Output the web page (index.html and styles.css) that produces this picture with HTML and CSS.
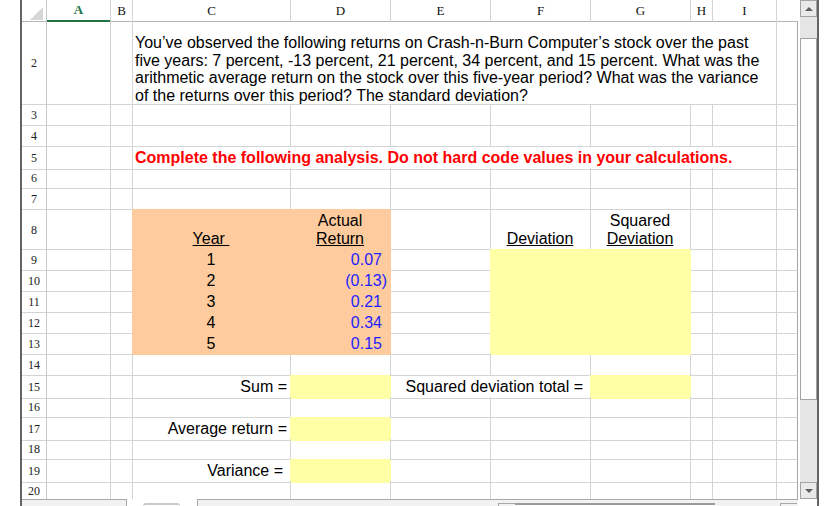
FILE: index.html
```html
<!DOCTYPE html>
<html lang="en">
<head>
<meta charset="utf-8">
<title>Crash-n-Burn Computer returns</title>
<link rel="stylesheet" href="styles.css">
</head>
<body>
<div class="window">
  <div class="gutter"></div>
  <div class="edge"></div>
  <div class="sheet">
    <div class="row hdr">
      <div class="corner"><svg width="13" height="13" viewBox="0 0 13 13"><polygon points="13,0 13,13 0,13" fill="#d6d6d6"/></svg></div>
      <div class="sel">A</div><div>B</div><div>C</div><div>D</div><div>E</div><div>F</div><div>G</div><div>H</div><div>I</div><div class="cj"></div>
    </div>
    <div class="row tall">
      <div class="rh">2</div><div></div><div></div>
      <div class="span-ci"><span class="para">You’ve observed the following returns on Crash-n-Burn Computer’s stock over the past<br>five years: 7 percent, -13 percent, 21 percent, 34 percent, and 15 percent. What was the<br>arithmetic average return on the stock over this five-year period? What was the variance<br>of the returns over this period? The standard deviation?</span></div>
      <div class="cj"></div>
    </div>
    <div class="row"><div class="rh">3</div><div></div><div></div><div></div><div></div><div></div><div></div><div></div><div></div><div></div><div class="cj"></div></div>
    <div class="row"><div class="rh">4</div><div></div><div></div><div></div><div></div><div></div><div></div><div></div><div></div><div></div><div class="cj"></div></div>
    <div class="row">
      <div class="rh">5</div><div></div><div></div>
      <div class="span-ci red">Complete the following analysis. Do not hard code values in your calculations.</div>
      <div class="cj"></div>
    </div>
    <div class="row"><div class="rh">6</div><div></div><div></div><div></div><div></div><div></div><div></div><div></div><div></div><div></div><div class="cj"></div></div>
    <div class="row"><div class="rh">7</div><div></div><div></div><div></div><div></div><div></div><div></div><div></div><div></div><div></div><div class="cj"></div></div>
    <div class="row mid">
      <div class="rh">8</div><div></div><div></div>
      <div class="org ctr"><u class="keep">Year </u></div>
      <div class="org ctr"><span class="stack">Actual<br><u>Return</u></span></div>
      <div></div>
      <div class="ctr"><u>Deviation</u></div>
      <div class="ctr"><span class="stack">Squared<br><u>Deviation</u></span></div>
      <div></div><div></div><div class="cj"></div>
    </div>
    <div class="row"><div class="rh">9</div><div></div><div></div><div class="org ctr">1</div><div class="org num pos">0.07</div><div></div><div class="yel"></div><div class="yel"></div><div></div><div></div><div class="cj"></div></div>
    <div class="row"><div class="rh">10</div><div></div><div></div><div class="org ctr">2</div><div class="org num">(0.13)</div><div></div><div class="yel"></div><div class="yel"></div><div></div><div></div><div class="cj"></div></div>
    <div class="row"><div class="rh">11</div><div></div><div></div><div class="org ctr">3</div><div class="org num pos">0.21</div><div></div><div class="yel"></div><div class="yel"></div><div></div><div></div><div class="cj"></div></div>
    <div class="row"><div class="rh">12</div><div></div><div></div><div class="org ctr">4</div><div class="org num pos">0.34</div><div></div><div class="yel"></div><div class="yel"></div><div></div><div></div><div class="cj"></div></div>
    <div class="row"><div class="rh">13</div><div></div><div></div><div class="org ctr">5</div><div class="org num pos">0.15</div><div></div><div class="yel"></div><div class="yel"></div><div></div><div></div><div class="cj"></div></div>
    <div class="row"><div class="rh">14</div><div></div><div></div><div></div><div></div><div></div><div></div><div></div><div></div><div></div><div class="cj"></div></div>
    <div class="row">
      <div class="rh">15</div><div></div><div></div>
      <div class="rt">Sum =</div>
      <div class="yel"></div>
      <div class="span-ef rt trail">Squared deviation total =</div>
      <div class="yel"></div>
      <div></div><div></div><div class="cj"></div>
    </div>
    <div class="row"><div class="rh">16</div><div></div><div></div><div></div><div></div><div></div><div></div><div></div><div></div><div></div><div class="cj"></div></div>
    <div class="row"><div class="rh">17</div><div></div><div></div><div class="rt">Average return =</div><div class="yel"></div><div></div><div></div><div></div><div></div><div></div><div class="cj"></div></div>
    <div class="row"><div class="rh">18</div><div></div><div></div><div></div><div></div><div></div><div></div><div></div><div></div><div></div><div class="cj"></div></div>
    <div class="row"><div class="rh">19</div><div></div><div></div><div class="rt trail">Variance =</div><div class="yel"></div><div></div><div></div><div></div><div></div><div></div><div class="cj"></div></div>
    <div class="row"><div class="rh">20</div><div></div><div></div><div></div><div></div><div></div><div></div><div></div><div></div><div></div><div class="cj"></div></div>
  </div>
  <div class="vscroll">
    <div class="sbtn"><span class="tri-up"></span></div>
    <div class="track top"></div>
    <div class="thumb"></div>
    <div class="track fill"></div>
    <div class="sbtn"><span class="tri-down"></span></div>
  </div>
  <div class="edge"></div>
  <div class="rest"></div>
</div>
<div class="bottom">
  <div class="gutter"></div>
  <div class="edge"></div>
  <div class="tabs"></div>
  <div class="tabgap"><span class="tabmark"></span></div>
  <div class="hscroll">
    <div class="hgap"></div>
    <div class="hbtn"></div>
    <div class="hthumb"></div>
    <div class="hgap2"></div>
    <div class="hbtn end"></div>
  </div>
  <div class="bcorner"></div>
  <div class="edge"></div>
  <div class="rest"></div>
</div>
</body>
</html>
```
FILE: styles.css
```css
* { box-sizing: border-box; }
html, body { margin: 0; padding: 0; }
body {
  width: 828px;
  height: 506px;
  overflow: hidden;
  background: #fff;
  font-family: "Liberation Sans", Arial, sans-serif;
}

.window { display: flex; height: 499px; }
.gutter { width: 20px; flex: none; }
.edge { width: 2px; flex: none; background: #646464; }
.rest { width: 9px; flex: none; }

.sheet { width: 776px; height: 499px; overflow: hidden; flex: none; }

.row {
  display: grid;
  grid-template-columns: 25px 64px 22px 158px 100px 100px 100px 100px 22px 64px 21px;
  height: 21px;
}
.row.tall { height: 84px; }
.row.mid { height: 40px; }

.row > div {
  display: flex;
  align-items: flex-end;
  min-width: 0;
  padding: 0 3px 0 2px;
  border-right: 1px solid #d4d4d4;
  border-bottom: 1px solid #d4d4d4;
  font-size: 16px;
  line-height: 20px;
  white-space: nowrap;
  color: #000;
}

/* header row */
.hdr > div {
  align-items: center;
  justify-content: center;
  padding: 0;
  font-family: "Liberation Serif", "Times New Roman", serif;
  font-size: 13px;
  color: #111;
  border-bottom-color: #b4b4b4;
}
.hdr > .corner {
  justify-content: flex-end;
  align-items: flex-end;
  padding: 0 3px 1px 0;
  border-right-color: #c8c8c8;
}
.hdr > .sel {
  color: #217346;
  font-weight: bold;
  border-bottom: 2px solid #217346;
}
.hdr > .cj { border-right: 0; }

/* row numbers */
.row > .rh {
  justify-content: center;
  align-items: center;
  padding: 0;
  font-family: "Liberation Serif", "Times New Roman", serif;
  font-size: 12px;
  color: #222;
  border-right-color: #c8c8c8;
}

.row > .cj { border-right-color: #a6a6a6; }

/* merged cells */
.row > .span-ci { grid-column: 4 / 11; }
.row > .span-ef { grid-column: 6 / 8; }

.para {
  display: block;
  line-height: 17.4px;
}

.row > .red { color: #ff0000; font-weight: bold; line-height: 22px; }

.row > .ctr { justify-content: center; text-align: center; }
.row > .rt { justify-content: flex-end; line-height: 22px; }
.row > .trail { padding-right: 7px; }
.row > .num { justify-content: flex-end; color: #1f1fff; }
.row > .pos { padding-right: 8px; }

.stack { display: block; line-height: 18px; padding-bottom: 1px; }
.keep { white-space: pre; }

/* fills */
.row > .org {
  background: #fdcb9d;
  border-color: #fdcb9d;
  box-shadow: -1px -1px 0 0 #fdcb9d;
}
.row > .yel {
  background: #ffffa6;
  border-color: #ffffa6;
  box-shadow: -1px -1px 0 0 #ffffa6;
}

/* vertical scrollbar */
.vscroll {
  width: 19px;
  flex: none;
  padding-left: 2px;
  display: flex;
  flex-direction: column;
}
.sbtn {
  height: 17px;
  flex: none;
  background: #e9e9e9;
  border: 1px solid #a3a3a3;
  display: flex;
  align-items: center;
  justify-content: center;
}
.tri-up {
  width: 0; height: 0;
  border-left: 4px solid transparent;
  border-right: 4px solid transparent;
  border-bottom: 4px solid #5e5e5e;
}
.tri-down {
  width: 0; height: 0;
  border-left: 4px solid transparent;
  border-right: 4px solid transparent;
  border-top: 4px solid #5e5e5e;
}
.track { background: #e6e6e6; flex: none; }
.track.top { height: 21px; }
.track.fill { flex: 1; }
.thumb {
  height: 362px;
  flex: none;
  background: #fff;
  border: 1px solid #a3a3a3;
}

/* bottom bar */
.bottom { display: flex; height: 7px; }
.tabs {
  width: 105px;
  flex: none;
  background: #f2f2f2;
  border-top: 1px solid #a8a8a8;
  border-right: 1px solid #a8a8a8;
}
.tabgap { width: 70px; flex: none; padding: 4px 0 0 16px; }
.tabmark {
  display: block;
  width: 37px;
  height: 3px;
  border-top: 2px solid #c9c9c9;
  border-radius: 6px 6px 0 0;
}
.hscroll {
  width: 601px;
  flex: none;
  display: flex;
  background: #f2f2f2;
  border-top: 1px solid #a8a8a8;
  border-left: 1px solid #a8a8a8;
  padding-top: 3px;
}
.hgap { width: 300px; flex: none; }
.hbtn { width: 17px; flex: none; border-left: 1px solid #a8a8a8; border-top: 1px solid #a8a8a8; }
.hbtn.end { width: 17px; }
.hthumb { width: 200px; flex: none; background: #fff; border-top: 2px solid #9c9c9c; }
.hgap2 { width: 65px; flex: none; }
.bcorner { width: 19px; flex: none; }
```
